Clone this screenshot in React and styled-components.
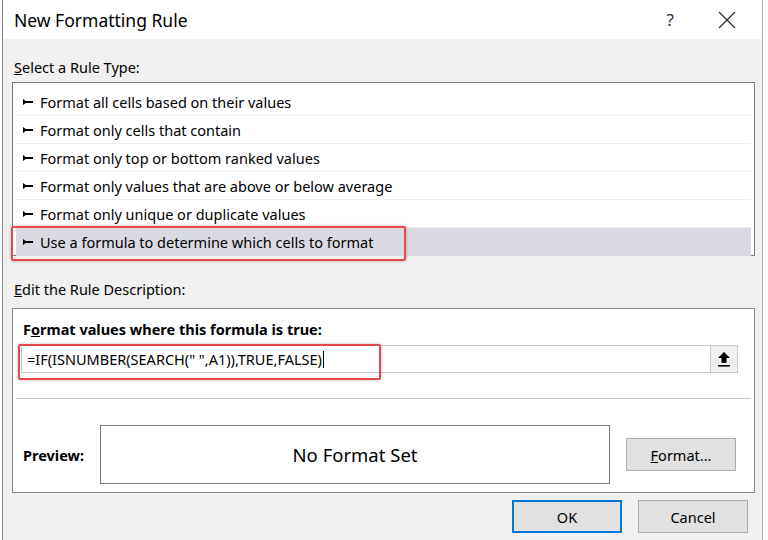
import React from "react";
import styled, { createGlobalStyle } from "styled-components";

const G = createGlobalStyle`
  html,body{margin:0;padding:0;background:#fff;}
  body{font-family:"Noto Sans","Open Sans",sans-serif;color:#000;}
`;
const Page = styled.div`width:768px;height:540px;display:flex;overflow:hidden;`;
const Dialog = styled.div`
  width:761px;height:540px;background:#f0f0f0;border-left:1px solid #888;margin-left:2px;
  border-right:1px solid #aaa;display:flex;flex-direction:column;box-sizing:border-box;
`;
const Title = styled.div`
  height:39px;background:#fff;display:flex;align-items:center;padding-left:11px;
  font-size:17.5px;position:relative;
`;
const TitleBtns = styled.div`
  margin-left:auto;display:flex;align-items:center;gap:44px;padding-right:26px;color:#333;font-size:17px;
`;
const Body = styled.div`padding:0 7px 0 9px;display:flex;flex-direction:column;`;
const Label = styled.div`font-size:14.5px;margin:${p=>p.m};`;
const U = styled.span`text-decoration:underline;`;
const List = styled.div`
  background:#fff;border:1px solid #7a7a7a;height:174px;padding:5px 3px 0 3px;box-sizing:border-box;
`;
const Row = styled.div`
  height:28px;display:flex;align-items:center;gap:6px;padding-left:7px;font-size:14.5px;
  border-bottom:1px solid ${p=>p.sel?"transparent":"#ececec"};box-sizing:border-box;
  background:${p=>p.sel?"#dadae2":"transparent"};position:relative;
`;
const Arrow = styled.span`display:inline-block;width:11px;height:6px;position:relative;
  &:before{content:"";position:absolute;left:0;top:2px;width:10px;height:2px;background:#000;}
  &:after{content:"";position:absolute;left:0;top:0;border-left:4px solid #000;border-top:3px solid transparent;border-bottom:3px solid transparent;}
`;
const RedBox = styled.div`
  position:absolute;border:2px solid #e8474b;border-radius:2px;box-shadow:0 0 3px rgba(0,0,0,.3);
  left:${p=>p.l}px;top:${p=>p.t}px;width:${p=>p.w}px;height:${p=>p.h}px;pointer-events:none;
`;
const Panel = styled.div`
  background:#fff;border:1px solid #8a8a8a;height:185px;box-sizing:border-box;padding:10px 3px 0 8px;
  display:flex;flex-direction:column;
`;
const Bold = styled.div`font-weight:700;font-size:14.5px;margin-left:2px;`;
const InputRow = styled.div`
  margin-top:6px;height:28px;border:1px solid #c8c8c8;display:flex;align-items:center;position:relative;
  width:717px;box-sizing:border-box;font-size:14.5px;padding-left:5px;
`;
const Caret = styled.span`display:inline-block;width:1px;height:17px;background:#000;margin-left:1px;`;
const UpBtn = styled.div`
  margin-left:auto;width:26px;height:26px;background:#f0f0f0;border-left:1px solid #c8c8c8;
  display:flex;align-items:center;justify-content:center;
`;
const Sep = styled.div`height:1px;background:#c8c8c8;margin:25px 0 0 -5px;`;
const PreviewRow = styled.div`display:flex;align-items:center;margin-top:26px;`;
const PreviewBox = styled.div`
  width:510px;height:59px;border:1px solid #7a7a7a;box-sizing:border-box;margin-left:16px;
  display:flex;align-items:center;justify-content:center;font-size:18.5px;
`;
const Btn = styled.div`
  width:${p=>p.w||110}px;height:33px;box-sizing:border-box;background:#e1e1e1;
  border:${p=>p.def?"2px solid #0078d7":"1px solid #adadad"};
  display:flex;align-items:center;justify-content:center;font-size:14.5px;margin-left:${p=>p.ml||0}px;
`;
const Footer = styled.div`display:flex;justify-content:flex-end;padding:7px 7px 0 0;`;

const rules = [
  "Format all cells based on their values",
  "Format only cells that contain",
  "Format only top or bottom ranked values",
  "Format only values that are above or below average",
  "Format only unique or duplicate values",
  "Use a formula to determine which cells to format",
];

export default function App(){
  return (<Page><G/>
    <Dialog>
      <Title>New Formatting Rule<TitleBtns><span>?</span>
        <svg width="18" height="18" viewBox="0 0 18 18"><path d="M1 1L17 17M17 1L1 17" stroke="#333" strokeWidth="1.3"/></svg>
      </TitleBtns></Title>
      <Body>
        <Label m="18px 0 5px 2px"><U>S</U>elect a Rule Type:</Label>
        <List>
          {rules.map((r,i)=>(<Row key={i} sel={i===5}><Arrow/>{r}
            {i===5 && <RedBox l={-5} t={-2} w={391} h={31}/>}
          </Row>))}
        </List>
        <Label m="23px 0 9px 2px"><U>E</U>dit the Rule Description:</Label>
        <Panel>
          <Bold>F<U>o</U>rmat values where this formula is true:</Bold>
          <InputRow>=IF(ISNUMBER(SEARCH(" ",A1)),TRUE,FALSE)<Caret/>
            <UpBtn><svg width="14" height="16" viewBox="0 0 14 16"><path d="M7 1L1 7H4.5V12H9.5V7H13Z" fill="#000"/><rect x="1" y="14" width="12" height="1.6" fill="#000"/></svg></UpBtn>
            <RedBox l={-4} t={-2} w={359} h={32}/>
          </InputRow>
          <Sep/>
          <PreviewRow>
            <Bold>Preview:</Bold>
            <PreviewBox>No Format Set</PreviewBox>
            <Btn ml={16}><U>F</U>ormat...</Btn>
          </PreviewRow>
        </Panel>
        <Footer>
          <Btn def w={110}>OK</Btn>
          <Btn ml={16} w={110}>Cancel</Btn>
        </Footer>
      </Body>
    </Dialog>
  </Page>);
}
